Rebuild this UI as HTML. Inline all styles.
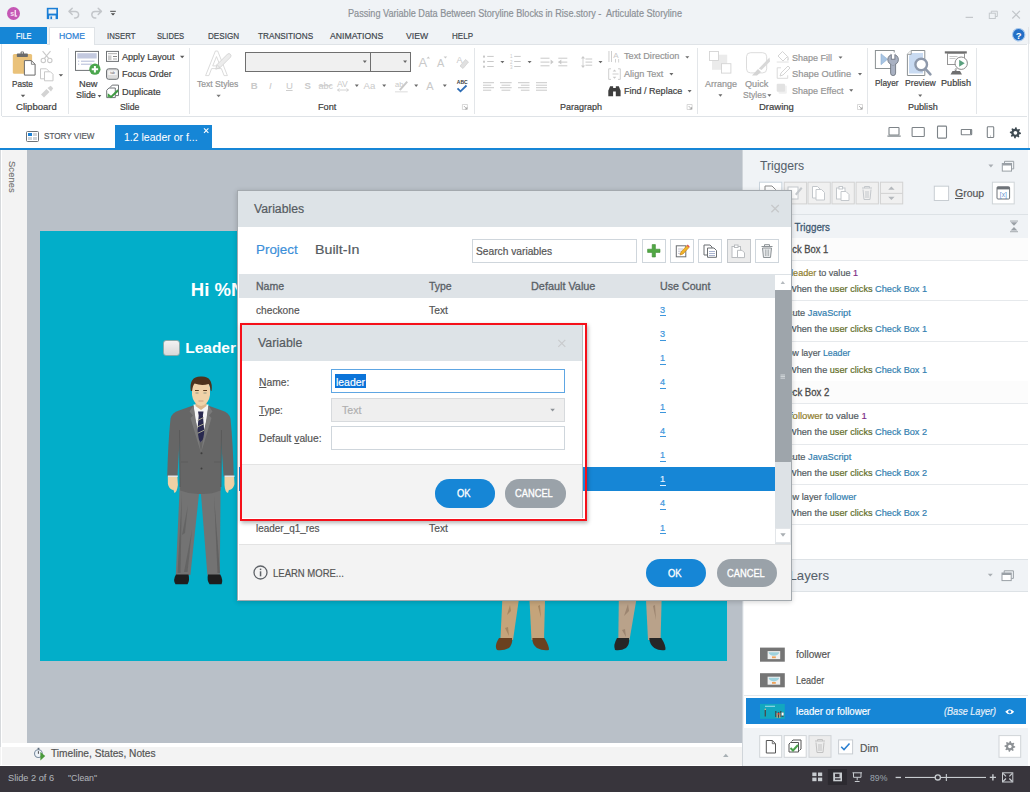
<!DOCTYPE html><html><head><meta charset="utf-8"><style>
html,body{margin:0;padding:0;width:1030px;height:792px;overflow:hidden;background:#fff;}
body{position:relative;font-family:"Liberation Sans",sans-serif;}
.a{position:absolute;}
.t{position:absolute;white-space:nowrap;line-height:1;transform-origin:0 0;}
svg{display:block;overflow:visible}
u{text-decoration:underline;}
.t{-webkit-text-stroke:0.2px currentColor}
</style></head><body>
<div class="a" style="left:0px;top:0px;width:1030px;height:44px;background:#f0f3f6;"></div>
<div class="a" style="left:0px;top:44px;width:1030px;height:105px;background:#ffffff;"></div>
<div class="a" style="left:1px;top:44px;width:1px;height:72px;background:#dfe3e7;"></div>
<div class="a" style="left:1028px;top:27px;width:1px;height:121px;background:#e3e6e9;"></div>
<div class="a" style="left:2px;top:116px;width:1025px;height:1px;background:#dfe3e7;"></div>
<div class="a" style="left:0px;top:26.6px;width:47.3px;height:17.4px;background:#1686d6;"></div>
<div class="a" style="left:49px;top:27px;width:46px;height:18px;background:#ffffff;border:1px solid #dfe3e7;border-bottom:none;box-sizing:border-box;"></div>
<div class="a" style="left:47.3px;top:43.5px;width:2px;height:1px;background:#dfe3e7;"></div>
<div class="a" style="left:95px;top:43.5px;width:932px;height:1px;background:#dfe3e7;"></div>
<div class="a" style="left:6px;top:6px;width:15px;height:15px;"><svg width="15" height="15" viewBox="0 0 15 15"><circle cx="7.5" cy="7.5" r="6.5" fill="#c557b5"/><text x="4.2" y="9.9" font-size="7" font-family="Liberation Sans" font-weight="bold" fill="#f4dcf0">s</text><path d="M9.3,4 v5.9 h1.8" fill="none" stroke="#f4dcf0" stroke-width="1.5"/></svg></div>
<div class="t" style="left:347.7px;top:9.2px;font-size:10.0px;color:#8c9196;transform:scaleX(0.9123);">Passing Variable Data Between Storyline Blocks in Rise.story -&nbsp; Articulate Storyline</div>
<div class="t" style="left:15.8px;top:30.75px;font-size:9.71px;color:#ffffff;transform:scaleX(0.7561);">FILE</div>
<div class="t" style="left:59.3px;top:30.75px;font-size:9.71px;color:#2a7ed3;transform:scaleX(0.8893);">HOME</div>
<div class="t" style="left:107px;top:30.75px;font-size:9.71px;color:#40464c;transform:scaleX(0.8021);">INSERT</div>
<div class="t" style="left:156.8px;top:30.75px;font-size:9.71px;color:#40464c;transform:scaleX(0.7880);">SLIDES</div>
<div class="t" style="left:207.8px;top:30.75px;font-size:9.71px;color:#40464c;transform:scaleX(0.8360);">DESIGN</div>
<div class="t" style="left:258.3px;top:30.75px;font-size:9.71px;color:#40464c;transform:scaleX(0.8446);">TRANSITIONS</div>
<div class="t" style="left:330.3px;top:30.75px;font-size:9.71px;color:#40464c;transform:scaleX(0.8915);">ANIMATIONS</div>
<div class="t" style="left:405.6px;top:30.75px;font-size:9.71px;color:#40464c;transform:scaleX(0.8907);">VIEW</div>
<div class="t" style="left:452px;top:30.75px;font-size:9.71px;color:#40464c;transform:scaleX(0.8281);">HELP</div>
<div class="a" style="left:67.5px;top:48px;width:1px;height:66px;background:#e3e6e9;"></div>
<div class="a" style="left:188.5px;top:48px;width:1px;height:66px;background:#e3e6e9;"></div>
<div class="a" style="left:473.5px;top:48px;width:1px;height:66px;background:#e3e6e9;"></div>
<div class="a" style="left:696.5px;top:48px;width:1px;height:66px;background:#e3e6e9;"></div>
<div class="a" style="left:866.5px;top:48px;width:1px;height:66px;background:#e3e6e9;"></div>
<div class="a" style="left:975.5px;top:48px;width:1px;height:66px;background:#e3e6e9;"></div>
<div class="t" style="left:11.7px;top:79.39px;font-size:9.42px;color:#3e3e3e;transform:scaleX(0.8686);">Paste</div>
<div class="t" style="left:15.5px;top:102.64px;font-size:9.13px;color:#3e3e3e;transform:scaleX(1.0445);">Clipboard</div>
<div class="t" style="left:79.2px;top:79.64px;font-size:9.13px;color:#3e3e3e;transform:scaleX(1.0128);">New</div>
<div class="t" style="left:75.7px;top:89.67px;font-size:9.57px;color:#3e3e3e;transform:scaleX(0.9311);">Slide</div>
<div class="t" style="left:122px;top:51.79px;font-size:9.42px;color:#3e3e3e;transform:scaleX(0.9634);">Apply Layout</div>
<div class="t" style="left:122px;top:69.51px;font-size:9.28px;color:#3e3e3e;transform:scaleX(0.9670);">Focus Order</div>
<div class="t" style="left:122px;top:86.99px;font-size:9.42px;color:#3e3e3e;transform:scaleX(0.9893);">Duplicate</div>
<div class="t" style="left:119.5px;top:102.37px;font-size:9.57px;color:#3e3e3e;transform:scaleX(0.9170);">Slide</div>
<div class="t" style="left:197px;top:79.39px;font-size:9.42px;color:#959595;transform:scaleX(0.9102);">Text Styles</div>
<div class="t" style="left:317.6px;top:102.64px;font-size:9.13px;color:#3e3e3e;transform:scaleX(1.0074);">Font</div>
<div class="t" style="left:624.2px;top:52.01px;font-size:9.28px;color:#959595;transform:scaleX(0.9850);">Text Direction</div>
<div class="t" style="left:624.2px;top:69.09px;font-size:9.42px;color:#959595;transform:scaleX(0.9702);">Align Text</div>
<div class="t" style="left:624.2px;top:86.09px;font-size:9.42px;color:#3e3e3e;transform:scaleX(0.9595);">Find / Replace</div>
<div class="t" style="left:559.5px;top:102.64px;font-size:9.13px;color:#3e3e3e;transform:scaleX(0.9853);">Paragraph</div>
<div class="t" style="left:704.6px;top:79.39px;font-size:9.42px;color:#959595;transform:scaleX(0.9561);">Arrange</div>
<div class="t" style="left:745.3px;top:79.39px;font-size:9.42px;color:#959595;transform:scaleX(0.9689);">Quick</div>
<div class="t" style="left:742.8px;top:89.67px;font-size:9.57px;color:#959595;transform:scaleX(0.8907);">Styles</div>
<div class="t" style="left:792px;top:52.99px;font-size:9.42px;color:#959595;transform:scaleX(0.9563);">Shape Fill</div>
<div class="t" style="left:792px;top:69.09px;font-size:9.42px;color:#959595;transform:scaleX(0.9929);">Shape Outline</div>
<div class="t" style="left:792px;top:85.59px;font-size:9.42px;color:#959595;transform:scaleX(0.9571);">Shape Effect</div>
<div class="t" style="left:759px;top:102.64px;font-size:9.13px;color:#3e3e3e;transform:scaleX(1.0423);">Drawing</div>
<div class="t" style="left:875.2px;top:79.44px;font-size:9.13px;color:#3e3e3e;transform:scaleX(0.9121);">Player</div>
<div class="t" style="left:904.9px;top:79.44px;font-size:9.13px;color:#3e3e3e;transform:scaleX(0.9455);">Preview</div>
<div class="t" style="left:940.9px;top:79.44px;font-size:9.13px;color:#3e3e3e;transform:scaleX(1.0021);">Publish</div>
<div class="t" style="left:907.5px;top:102.54px;font-size:9.13px;color:#3e3e3e;transform:scaleX(0.9921);">Publish</div>
<div class="a" style="left:244.8px;top:52px;width:126px;height:19.5px;background:#f0f0f0;border:1px solid #6f6f6f;box-sizing:border-box;"></div>
<div class="a" style="left:369.7px;top:52px;width:41px;height:19.5px;background:#f0f0f0;border:1px solid #6f6f6f;box-sizing:border-box;"></div>
<svg class="a" style="left:0;top:0" width="1030" height="150" viewBox="0 0 1030 150"><rect x="46.8" y="7.8" width="11.2" height="11.3" fill="#1a7ed6"/><rect x="48.5" y="9.3" width="7.8" height="4.3" fill="#f0f3f6"/><rect x="49.2" y="15.5" width="6.4" height="3.6" fill="#f0f3f6"/><rect x="50.4" y="16.4" width="1.7" height="2.7" fill="#1a7ed6"/><path d="M72.2,8.3 l-3.2,3.1 l3.2,3.1 M69.2,11.4 h6 a3.3,3.3 0 0 1 0.2,6.6 h-0.8" fill="none" stroke="#c3c6ca" stroke-width="1.5" stroke-linejoin="round" stroke-linecap="round"/><path d="M98.2,8.3 l3.2,3.1 l-3.2,3.1 M101.2,11.4 h-6 a3.3,3.3 0 0 0 -0.2,6.6 h0.8" fill="none" stroke="#c3c6ca" stroke-width="1.5" stroke-linejoin="round" stroke-linecap="round"/><rect x="110.2" y="10.8" width="5.6" height="1" fill="#4a4a4a"/><path d="M110.8,13.2 h4.4 l-2.2,2.3 z" fill="#4a4a4a"/><rect x="965.6" y="16.8" width="7.4" height="1.1" fill="#bfc3c7"/><rect x="989.3" y="13.2" width="6" height="5.3" fill="none" stroke="#c4c8cc" stroke-width="1"/><path d="M991.3,13.2 v-2 h6 v5.3 h-2" fill="none" stroke="#c4c8cc" stroke-width="1"/><path d="M1012.3,10.9 l7.6,7.6 M1019.9,10.9 l-7.6,7.6" stroke="#c2c6ca" stroke-width="1.2"/><circle cx="1018.7" cy="34.7" r="6.2" fill="#236fc6" stroke="#a9c8ec" stroke-width="1.1"/><text x="1018.7" y="38.6" font-family="Liberation Sans" font-weight="bold" font-size="9.5" fill="#fff" text-anchor="middle">?</text><rect x="12.8" y="53.9" width="19.3" height="19.9" rx="1.5" fill="#eac27a"/><rect x="16.8" y="53.6" width="11.1" height="3.4" rx="0.8" fill="#6b6b6b"/><rect x="20.6" y="51.4" width="3.4" height="3" rx="1" fill="#6b6b6b"/><rect x="21.6" y="52.3" width="1.4" height="1.2" fill="#eee"/><path d="M24.4,60.6 h7 l3.7,3.7 v10.8 h-10.7 z" fill="#fff" stroke="#6b6b6b" stroke-width="1"/><path d="M31.4,60.6 v3.7 h3.7" fill="none" stroke="#6b6b6b" stroke-width="0.8"/><path d="M20.8,94.8 h4.4 l-2.2,2.4 z" fill="#5a5a5a"/><g fill="none" stroke="#c9c9c9" stroke-width="1.1"><circle cx="43.3" cy="60.4" r="2.2"/><circle cx="49.8" cy="60.4" r="2.2"/><path d="M44.4,58.4 L50.5,51.2 M48.7,58.4 L42.6,51.2"/></g><g fill="#fff" stroke="#c9c9c9" stroke-width="1"><path d="M40.5,68.8 h6 l2.5,2.5 v7.5 h-8.5 z"/><path d="M44.5,71.8 h6 l2.5,2.5 v6.5 h-8.5 z"/></g><path d="M58.699999999999996,74.2 h4.4 l-2.2,2.4 z" fill="#5a5a5a"/><g fill="#c9c9c9" opacity="0.8"><path d="M41,94.5 l5.5,-5.5 l3,3 l-5.5,5.5 z"/><path d="M47.5,88 l3.2,-2.2 l2.5,2.5 l-2.2,3.2 z"/></g><rect x="75.5" y="51.4" width="23" height="19" fill="#fff" stroke="#6f7376" stroke-width="1"/><rect x="77.3" y="53.2" width="19.4" height="5.3" fill="#c3c9df"/><rect x="78" y="60.6" width="1.2" height="1.2" fill="#c3c9df"/><rect x="81" y="60.6" width="13.5" height="1.3" fill="#c3c9df"/><rect x="78" y="63.6" width="1.2" height="1.2" fill="#c3c9df"/><rect x="81" y="63.6" width="11" height="1.3" fill="#c3c9df"/><circle cx="94.9" cy="69.2" r="5.6" fill="#4aa64d"/><path d="M94.9,66 v6.4 M91.7,69.2 h6.4" stroke="#fff" stroke-width="2"/><path d="M97.7,95.1 h3.6 l-1.8,2.4 z" fill="#5a5a5a"/><rect x="106.5" y="51.4" width="12" height="10" fill="#fff" stroke="#6f7376" stroke-width="1"/><rect x="108" y="53" width="9" height="1.2" fill="#bbb"/><rect x="108" y="55.4" width="3.5" height="4.8" fill="#ccc"/><rect x="113" y="56" width="4" height="1" fill="#888"/><rect x="113" y="58.5" width="4" height="1" fill="#aaa"/><path d="M180.0,55.8 h4.4 l-2.2,2.4 z" fill="#5a5a5a"/><rect x="106.5" y="68.8" width="12" height="10.5" rx="2.2" fill="#dcdcdc" stroke="#6f7376" stroke-width="1"/><rect x="108.2" y="70.4" width="8.6" height="4.6" rx="0.6" fill="#f4f4f4"/><text x="112.5" y="73.9" font-family="Liberation Sans" font-size="3.2" fill="#555" text-anchor="middle">tab</text><path d="M110,87.5 l2.2,-2.4 h6.3 v10.5 h-3" fill="#fff" stroke="#6f7376" stroke-width="1"/><path d="M106.7,90.3 l2.2,-2.3 h6.4 v9.6 h-8.6 z" fill="#fff" stroke="#6f7376" stroke-width="1"/><path d="M107.8,93.2 l3.2,2.6 l6.6,-6.6 l0.9,2.2 l-7.5,6.8 l-3.3,-2.6 z" fill="#3f9a42"/><path d="M107.5,95.5 v1.8 h4.5 z" fill="#57ad58"/><path d="M205.6,75.6 L215.4,51 h2.3 L227.4,75.6 h-3.3 L221.4,68.6 h-9.8 L208.9,75.6 z M212.7,65.9 h7.6 L216.5,56.6 z" fill="#fff" stroke="#d2d2d2" stroke-width="0.8" fill-rule="evenodd"/><path d="M215.8,69.2 l1.2,-4.6 l10.6,-10.6 q1.6,-1 2.8,0.3 q1.2,1.2 0.2,2.8 l-10.6,10.6 z" fill="#ececec" stroke="#cfcfcf" stroke-width="0.8"/><path d="M217,64.6 l3.4,3.4" stroke="#cfcfcf" stroke-width="0.7"/><path d="M216.4,94.8 h4.4 l-2.2,2.4 z" fill="#7a7a7a"/><path d="M362.8,60.599999999999994 h4 l-2.0,2.4 z" fill="#666"/><path d="M403.1,60.599999999999994 h4 l-2.0,2.4 z" fill="#666"/><path d="M354.8,84.5 h4 l-2.0,2.4 z" fill="#6a6a6a"/><path d="M382.2,84.5 h4 l-2.0,2.4 z" fill="#6a6a6a"/><path d="M414.2,84.5 h4 l-2.0,2.4 z" fill="#6a6a6a"/><path d="M442.8,84.5 h4 l-2.0,2.4 z" fill="#6a6a6a"/><path d="M500.4,60.9 h4 l-2.0,2.4 z" fill="#6a6a6a"/><path d="M527.6,60.9 h4 l-2.0,2.4 z" fill="#6a6a6a"/><path d="M598.5,60.9 h4 l-2.0,2.4 z" fill="#6a6a6a"/><path d="M685.3,56.199999999999996 h4 l-2.0,2.4 z" fill="#6a6a6a"/><path d="M669.4,73.0 h4 l-2.0,2.4 z" fill="#6a6a6a"/><path d="M687.6,90.1 h4 l-2.0,2.4 z" fill="#6a6a6a"/><path d="M718.4,94.3 h4 l-2.0,2.4 z" fill="#6a6a6a"/><path d="M767.4,94.3 h4 l-2.0,2.4 z" fill="#6a6a6a"/><path d="M838.5,56.4 h4 l-2.0,2.4 z" fill="#6a6a6a"/><path d="M858.0,73.0 h4 l-2.0,2.4 z" fill="#6a6a6a"/><path d="M849.2,89.3 h4 l-2.0,2.4 z" fill="#6a6a6a"/><path d="M918.2,94.5 h4 l-2.0,2.4 z" fill="#6a6a6a"/><text x="418.6" y="67" font-family="Liberation Sans" font-size="13" fill="#c9c9c9">A</text><path d="M426.5,58.5 l1.8,-2 l1.8,2" fill="#c9c9c9"/><text x="437" y="67" font-family="Liberation Sans" font-size="11" fill="#c9c9c9">A</text><path d="M443.6,56.4 h3.6 l-1.8,2 z" fill="#c9c9c9"/><text x="456.5" y="63" font-family="Liberation Sans" font-size="9" fill="#c9c9c9">A</text><path d="M460,66 l5.5,-6.5 l3,2.5 l-5.5,6.5 z" fill="#e0e0e0" stroke="#c9c9c9" stroke-width="0.6"/><g font-family="Liberation Sans" fill="#c9c9c9"><text x="250.7" y="88.8" font-size="9.6" font-weight="bold">B</text><text x="269" y="88.8" font-size="9.6" font-style="italic">I</text><text x="286" y="88.8" font-size="9.6">U</text><text x="304.6" y="88.8" font-size="9.6" font-weight="bold">S</text><text x="318.6" y="88.8" font-size="9">abc</text></g><rect x="286" y="90" width="6.6" height="0.9" fill="#c9c9c9"/><rect x="318.6" y="85.3" width="13" height="0.9" fill="#c9c9c9"/><text x="337" y="87" font-family="Liberation Sans" font-size="8.6" fill="#c9c9c9">AV</text><path d="M337.5,90 h11 M337.5,90 l2,-1.5 M337.5,90 l2,1.5 M348.5,90 l-2,-1.5 M348.5,90 l-2,1.5" stroke="#c9c9c9" stroke-width="0.8" fill="none"/><text x="363.6" y="89.2" font-family="Liberation Sans" font-size="9.6" fill="#c9c9c9">Aa</text><text x="395" y="87" font-family="Liberation Sans" font-size="7.5" fill="#c9c9c9">ab</text><path d="M399,89.5 l7.5,-8.5 l1.5,1.3 l-7.5,8.5 z" fill="#c9c9c9"/><rect x="395" y="91" width="12.7" height="1.5" fill="#e8e8e8"/><text x="426.3" y="90" font-family="Liberation Sans" font-size="11" fill="#c9c9c9">A</text><text x="456.8" y="84.2" font-family="Liberation Sans" font-size="5" font-weight="bold" fill="#3a3a3a">ABC</text><path d="M457.5,88.3 l3,3 l6,-5.8" fill="none" stroke="#2e6db5" stroke-width="1.8"/><path d="M462.4,104.5 h5 v5 h-5 z" fill="none" stroke="#c8c8c8" stroke-width="0.7"/><path d="M463.9,106 l3,3 m0,-2 v2 h-2" fill="none" stroke="#999" stroke-width="0.7"/><path d="M687.1,104.5 h5 v5 h-5 z" fill="none" stroke="#c8c8c8" stroke-width="0.7"/><path d="M688.6,106 l3,3 m0,-2 v2 h-2" fill="none" stroke="#999" stroke-width="0.7"/><path d="M857.5,104.5 h5 v5 h-5 z" fill="none" stroke="#c8c8c8" stroke-width="0.7"/><path d="M859,106 l3,3 m0,-2 v2 h-2" fill="none" stroke="#999" stroke-width="0.7"/><rect x="483" y="55.6" width="2" height="2" fill="#c9c9c9"/><rect x="487.2" y="55.9" width="6.5" height="1" fill="#c9c9c9"/><rect x="483" y="60.7" width="2" height="2" fill="#c9c9c9"/><rect x="487.2" y="61.0" width="6.5" height="1" fill="#c9c9c9"/><rect x="483" y="65.7" width="2" height="2" fill="#c9c9c9"/><rect x="487.2" y="66.0" width="6.5" height="1" fill="#c9c9c9"/><text x="510" y="58.4" font-family="Liberation Sans" font-size="4.5" fill="#c9c9c9">1</text><rect x="514.2" y="55.9" width="6.5" height="1" fill="#c9c9c9"/><text x="510" y="63.5" font-family="Liberation Sans" font-size="4.5" fill="#c9c9c9">2</text><rect x="514.2" y="61.0" width="6.5" height="1" fill="#c9c9c9"/><text x="510" y="68.5" font-family="Liberation Sans" font-size="4.5" fill="#c9c9c9">3</text><rect x="514.2" y="66.0" width="6.5" height="1" fill="#c9c9c9"/><rect x="540.5" y="57.7" width="9" height="1" fill="#c9c9c9"/><rect x="540.5" y="61.6" width="9" height="1" fill="#c9c9c9"/><rect x="540.5" y="65.3" width="9" height="1" fill="#c9c9c9"/><path d="M553.6,62.1 l-3,-2.5 v5 z" fill="#c9c9c9"/><rect x="558.3" y="57.7" width="9" height="1" fill="#c9c9c9"/><rect x="558.3" y="61.6" width="9" height="1" fill="#c9c9c9"/><rect x="558.3" y="65.3" width="9" height="1" fill="#c9c9c9"/><path d="M558.3,62.1 l3,-2.5 v5 z" fill="#c9c9c9"/><rect x="585.5" y="58.5" width="6.7" height="1" fill="#c9c9c9"/><rect x="585.5" y="61.6" width="6.7" height="1" fill="#c9c9c9"/><rect x="585.5" y="64.7" width="6.7" height="1" fill="#c9c9c9"/><path d="M583,56 l-2,2.5 h4 z M583,68.1 l-2,-2.5 h4 z" fill="#c9c9c9"/><rect x="582.6" y="58" width="0.8" height="8" fill="#c9c9c9"/><rect x="483.0" y="82.2" width="11.0" height="1" fill="#c9c9c9"/><rect x="483.0" y="84.7" width="8.2" height="1" fill="#c9c9c9"/><rect x="483.0" y="87.2" width="11.0" height="1" fill="#c9c9c9"/><rect x="483.0" y="89.7" width="8.2" height="1" fill="#c9c9c9"/><rect x="500.0" y="82.2" width="11.7" height="1" fill="#c9c9c9"/><rect x="501.5" y="84.7" width="8.8" height="1" fill="#c9c9c9"/><rect x="500.0" y="87.2" width="11.7" height="1" fill="#c9c9c9"/><rect x="501.5" y="89.7" width="8.8" height="1" fill="#c9c9c9"/><rect x="518.0" y="82.2" width="11.5" height="1" fill="#c9c9c9"/><rect x="520.9" y="84.7" width="8.6" height="1" fill="#c9c9c9"/><rect x="518.0" y="87.2" width="11.5" height="1" fill="#c9c9c9"/><rect x="520.9" y="89.7" width="8.6" height="1" fill="#c9c9c9"/><rect x="536.0" y="82.2" width="11.0" height="1" fill="#c9c9c9"/><rect x="536.0" y="84.7" width="11.0" height="1" fill="#c9c9c9"/><rect x="536.0" y="87.2" width="11.0" height="1" fill="#c9c9c9"/><rect x="536.0" y="89.7" width="11.0" height="1" fill="#c9c9c9"/><g fill="#c9c9c9"><rect x="608.5" y="51" width="0.9" height="11"/><rect x="611" y="51" width="0.9" height="11"/><text x="613.3" y="58" font-family="Liberation Sans" font-size="8" fill="#c9c9c9">A</text><rect x="615" y="59" width="0.8" height="3.5"/><rect x="618.3" y="59" width="0.8" height="3.5"/></g><g fill="none" stroke="#c9c9c9" stroke-width="0.9"><path d="M611,68.8 h-2.3 v10.6 h2.3 M618,68.8 h2.3 v10.6 h-2.3"/><path d="M612.5,74 h6"/></g><path d="M614.5,69.5 l-1.8,2 h3.6 z M614.5,78.8 l-1.8,-2 h3.6 z" fill="#c9c9c9"/><g fill="#3d3d3d"><path d="M608.3,96.3 v-5.5 l1.8,-4.5 h3 v10 z"/><path d="M620.6,96.3 v-5.5 l-1.8,-4.5 h-3 v10 z"/><rect x="612.6" y="88" width="3.6" height="3.5"/></g><rect x="712" y="54.7" width="15.2" height="15.1" fill="#ebebeb"/><rect x="709.5" y="51.5" width="9" height="9" fill="#fff" stroke="#d4d4d4" stroke-width="0.9"/><rect x="721.5" y="63.7" width="9.4" height="9.4" fill="#fff" stroke="#d4d4d4" stroke-width="0.9"/><rect x="746.5" y="52.7" width="20.2" height="20.2" rx="4" fill="#fff" stroke="#d8d8d8" stroke-width="0.9"/><path d="M752,75.5 l6,-6.5 l3,3 l-4,3.5 z" fill="#d4d4d4"/><path d="M758.8,68.4 l10.7,-10.8 l0.5,4 l-8.5,8.5 z" fill="#d8d8d8"/><path d="M778,56 l4.5,-4.5 l5,5 l-4.5,4.5 z" fill="#fff" stroke="#d0d0d0" stroke-width="0.9"/><path d="M787.5,56.5 q1.5,2.5 0,4" fill="none" stroke="#d6d6d6" stroke-width="1.2"/><rect x="776.7" y="61.3" width="12" height="1.5" fill="#ececec"/><path d="M781,67.8 h-3.8 v10.5 h10.5 v-3" fill="none" stroke="#d6d6d6" stroke-width="0.9"/><path d="M780,76 l1,-3 l7,-7 l2,2 l-7,7 z" fill="#fff" stroke="#d0d0d0" stroke-width="0.9"/><rect x="778.5" y="85.5" width="8.3" height="8.3" rx="1" fill="#f0f0f0"/><rect x="776.7" y="83.8" width="8.3" height="8" rx="1" fill="#e2e2e2"/><rect x="875.4" y="50.5" width="18.8" height="18" fill="#fff" stroke="#8b9193" stroke-width="1"/><path d="M881,53.8 v10.9 l6.6,-5.5 z" fill="#a8c5e3" stroke="#8fb0d5" stroke-width="0.6"/><g fill="#a9b1c2" stroke="#6f7680" stroke-width="0.9"><rect x="890.6" y="62" width="5" height="13.6" rx="2.5"/><circle cx="893.1" cy="59.6" r="5.3"/></g><rect x="891.3" y="53.6" width="3.6" height="5.6" fill="#fff" stroke="#6f7680" stroke-width="0.9"/><rect x="890.7" y="52.5" width="4.8" height="1.8" fill="#fff"/><rect x="891.3" y="62" width="3.6" height="3" fill="#a9b1c2"/><path d="M911.2,50.5 h13.6 v25 h-17.4 v-21.2 z" fill="#fff" stroke="#8b9193" stroke-width="1"/><path d="M910,53 h13 v20.5 h-14 v-17 z" fill="#c9dbf2"/><path d="M907.4,54.3 h3.8 v-3.8" fill="#fff" stroke="#8b9193" stroke-width="0.9"/><circle cx="921.2" cy="64.5" r="5.8" fill="#fff" stroke="#8e99ab" stroke-width="2.4"/><path d="M925.4,68.8 l5,5.6" stroke="#8e99ab" stroke-width="2.6" stroke-linecap="round"/><rect x="944.8" y="51.3" width="22" height="2.2" fill="#6f6f6f"/><rect x="947.5" y="53.5" width="17" height="11" fill="#fff" stroke="#8a8a8a" stroke-width="0.9"/><rect x="949.5" y="56" width="8" height="0.8" fill="#bbb"/><rect x="949.5" y="58" width="6" height="0.8" fill="#bbb"/><circle cx="961.2" cy="63.2" r="6.2" fill="#fff" stroke="#8a8a8a" stroke-width="1"/><path d="M959.2,59.8 v7 l5.5,-3.5 z" fill="#5aa07e"/><path d="M950.5,74.6 l2,-3.6 h7.5 l2,3.6 z" fill="#6f6f6f"/><path d="M956,68 v3 l-1.5,-1" stroke="#6f6f6f" stroke-width="0.8" fill="none"/></svg>
<div class="t" style="left:43.5px;top:132.44px;font-size:9.13px;color:#555a60;transform:scaleX(0.8891);">STORY VIEW</div>
<div class="a" style="left:115px;top:125px;width:96.6px;height:23px;background:#1686d6;"></div>
<div class="t" style="left:123.9px;top:132.21px;font-size:10.58px;color:#ffffff;transform:scaleX(0.9933);-webkit-text-stroke:0.05px currentColor;">1.2 leader or f...</div>
<svg class="a" style="left:0;top:0" width="1030" height="160" viewBox="0 0 1030 160"><path d="M204,128.4 l4.4,4.4 M208.4,128.4 l-4.4,4.4" stroke="#fff" stroke-width="1.1"/></svg>
<div class="a" style="left:0px;top:148px;width:1030px;height:2px;background:#1686d6;"></div>
<div class="a" style="left:0px;top:150px;width:27px;height:593px;background:#f3f3f3;"></div>
<div class="a" style="left:0px;top:150px;width:1px;height:616px;background:#d6d9dc;"></div>
<div class="a" style="left:27px;top:150px;width:715px;height:593px;background:#b9c0c8;"></div>
<div class="a" style="left:26.7px;top:742.6px;width:715.3px;height:4.3px;background:#ffffff;"></div>
<div class="a" style="left:0px;top:746.9px;width:742px;height:18.1px;background:#f3f3f3;"></div>
<div class="a" style="left:0px;top:765px;width:742px;height:1px;background:#ffffff;"></div>
<div class="a" style="left:1px;top:150px;width:1px;height:615px;background:#ffffff;"></div>
<svg class="a" style="left:0;top:0" width="1030" height="792" viewBox="0 0 1030 792"><path d="M723,757.1 h5.6 l-2.8,-3.4 z" fill="#a8b0b4"/></svg>
<div class="t" style="left:0px;top:-7.99px;font-size:9.4px;color:#6f6f6f;left:16.5px;top:161.2px;letter-spacing:0.1px;transform:rotate(90deg);transform-origin:0 0;-webkit-text-stroke:0.1px currentColor;">Scenes</div>
<div class="t" style="left:51px;top:748.85px;font-size:10.29px;color:#555;transform:scaleX(0.9877);">Timeline, States, Notes</div>
<div class="a" style="left:40px;top:230.7px;width:687.3px;height:430px;background:#02aec9;"></div>
<div class="t" style="left:190.8px;top:280.63px;font-size:18.55px;color:#ffffff;font-weight:700;-webkit-text-stroke:0;">Hi %Name%</div>
<div class="a" style="left:162.9px;top:340px;width:16.8px;height:16.2px;background:linear-gradient(#f2f2f2,#d8d8d8);border:1px solid #8aa;box-sizing:border-box;border-radius:3px;"></div>
<div class="t" style="left:185.2px;top:340.32px;font-size:15.51px;color:#ffffff;font-weight:700;-webkit-text-stroke:0;">Leader</div>
<svg class="a" style="left:0;top:0" width="1030" height="792" viewBox="0 0 1030 792"><path d="M179.8,484 h40.8 l-0.8,91 h-12.4 l-6.6,-83 h-1.6 l-8.8,83 h-14.6 z" fill="#737373"/><path d="M182,492 l-4.5,81 h3 z" fill="#636363"/><path d="M214,495 l3.5,78 h2.5 z" fill="#616161"/><path d="M192,530 l-8,42 h3.5 z M188,505 l-6,30 l3,-2 z" fill="#5e5e5e" opacity="0.7"/><path d="M176,574.5 h12.5 q1.5,6 -1,9.7 h-12 q-3,-4 0.5,-9.7 z" fill="#1e1e1e"/><path d="M208,574.5 h12.3 q3,5.5 1.3,9.7 h-12 q-3,-4 -1.6,-9.7 z" fill="#1e1e1e"/><path d="M167.8,477 h9.6 l0.5,8 q-1,7.5 -3.5,8 q-1,-4 -1.5,-3 q-4,-1 -5,-6 z" fill="#efd1a5"/><path d="M224.5,477 h9.6 l0.4,7 q-1,5 -5,6 q-0.5,-1 -1.5,3 q-3,-0.5 -3.5,-8 z" fill="#efd1a5"/><path d="M193,405.5 l-14,5 q-7,2 -8.5,8 q-2.5,25 -3.3,58 h10.2 l2.2,-36 l0.5,50 q10,4 20.5,3.5 q10.5,0.5 20,-3.5 l0.5,-50 l2.5,36 h10.2 q-0.8,-33 -3.3,-58 q-1.5,-6 -8.5,-8 l-14,-5 z" fill="#666666"/><path d="M179.5,430 l0.6,57 M221.5,430 l-0.6,57" stroke="#5a5a5a" stroke-width="1"/><path d="M167.8,475.5 h10 v1.6 h-10 z M224.5,475.5 h10 v1.6 h-10 z" fill="#e6e6e6"/><path d="M181,462 h7 M214,462 h7" stroke="#5c5c5c" stroke-width="0.8"/><path d="M193.5,404.5 h15 l-1.5,14 l-6,24 l-6,-24 z" fill="#f5f5f5"/><path d="M198,411.5 h5.5 l-0.6,4 l1.8,21 l-3.9,6 l-3.9,-6 l1.8,-21 z" fill="#29294f"/><path d="M197.6,420.5 l6,-3 M197.2,427 l6.8,-3.2 M197.2,433.5 l6.8,-3.2" stroke="#b7b59a" stroke-width="0.9"/><path d="M193.5,405.5 l-4,6 l3.5,4 l-2.5,2.5 l10.5,35 z" fill="#7a7a7a"/><path d="M208.5,405.5 l4,6 l-3.5,4 l2.5,2.5 l-10.5,35 z" fill="#7a7a7a"/><circle cx="201.5" cy="453.3" r="1" fill="#3e3e3e"/><circle cx="201.5" cy="468.5" r="1" fill="#3e3e3e"/><path d="M195.5,398 h11 v8 l-5.5,4 l-5.5,-4 z" fill="#dcb58a"/><path d="M192,388 q0,-9 9,-9 q9,0 9,9 v7 q-1,9 -9,11 q-8,-2 -9,-11 z" fill="#f0d2a8"/><path d="M190.8,391 q-2,-15 10.5,-14.5 q12,-0.5 10.3,14.5 l-1,-0.5 q-0.5,-5 -2,-6.5 q-7,2 -14,-0.5 q-2,2 -2.5,7.5 z" fill="#4e321c"/><path d="M195,390.5 h3.8 M203.2,390.5 h3.8" stroke="#5a3a20" stroke-width="1"/><path d="M195.5,393 h3 M203.5,393 h3" stroke="#7a8a7a" stroke-width="0.8"/><path d="M198.5,401 h5" stroke="#c4937a" stroke-width="0.8"/><path d="M502.3,600 h16.5 l-5.8,40 h-12.6 z" fill="#c5a47a"/><path d="M529.5,600 h15.5 l-1,40 h-12.5 z" fill="#c5a47a"/><path d="M510,605 l-3,10 l4,-4 z M538,606 l3,12 l-1,-13 z M505,628 l4,8 l-1,-9 z" fill="#a68660"/><path d="M499,638 h13 q1,6 -3,10 q-6,3 -12,2 q-3,-4 2,-12 z" fill="#6a4120"/><path d="M532.4,638 h12 q5,8 4.5,12 q-6,1 -12,-2 q-5,-4 -4.5,-10 z" fill="#6a4120"/><path d="M618.8,600 h17.5 l-6.8,40 h-11.2 z" fill="#b9a28a"/><path d="M646,600 h15.6 l-1,40 h-12.6 z" fill="#b9a28a"/><path d="M628,604 l-4,12 l5,-5 z M653,606 l3,14 l-1,-15 z M622,630 l4,7 l-1,-8 z" fill="#9c8570"/><path d="M617,638 h12 q1,6 -3,10 q-5,3 -11,2 q-2,-5 2,-12 z" fill="#262626"/><path d="M649.3,638 h12 q5,8 4,12 q-6,1 -11,-2 q-5,-4 -5,-10 z" fill="#262626"/></svg>
<div class="a" style="left:0px;top:766px;width:1030px;height:26px;background:#38353c;"></div>
<div class="t" style="left:8.2px;top:774.49px;font-size:8.84px;color:#b0b4ba;transform:scaleX(1.0437);-webkit-text-stroke:0.05px currentColor;">Slide 2 of 6</div>
<div class="t" style="left:67.5px;top:774.49px;font-size:8.84px;color:#b0b4ba;transform:scaleX(0.9917);-webkit-text-stroke:0.05px currentColor;">&quot;Clean&quot;</div>
<div class="t" style="left:869.7px;top:774.49px;font-size:8.84px;color:#97a0aa;transform:scaleX(0.9846);-webkit-text-stroke:0.05px currentColor;">89%</div>
<div class="a" style="left:742px;top:150px;width:286px;height:616px;background:#f0f3f6;"></div>
<div class="a" style="left:1028px;top:150px;width:2px;height:616px;background:#ffffff;"></div>
<div class="t" style="left:760.2px;top:160.08px;font-size:12.61px;color:#56616b;transform:scaleX(0.9655);-webkit-text-stroke:0.05px currentColor;">Triggers</div>
<div class="a" style="left:744px;top:214px;width:284px;height:1px;background:#dde2e6;"></div>
<div class="a" style="left:744px;top:214.5px;width:284px;height:23px;background:#f0f3f6;"></div>
<div class="t" style="left:769.76px;top:221.91px;font-size:11.16px;color:#3e5871;-webkit-text-stroke:0.3px currentColor;transform:scaleX(0.8801);">Slide Triggers</div>
<div class="a" style="left:744px;top:237.5px;width:284px;height:321px;background:#ffffff;"></div>
<div class="a" style="left:744px;top:237.5px;width:284px;height:23.0px;background:#fcfcfc;"></div>
<div class="a" style="left:744px;top:259.5px;width:284px;height:1px;background:#e6e9ec;"></div>
<div class="t" style="left:775.28px;top:245.38px;font-size:10.14px;color:#4a4a4a;-webkit-text-stroke:0.3px currentColor;transform:scaleX(0.9272);">Check Box 1</div>
<div class="a" style="left:744px;top:381px;width:284px;height:22.600000000000023px;background:#fcfcfc;"></div>
<div class="a" style="left:744px;top:402.6px;width:284px;height:1px;background:#e6e9ec;"></div>
<div class="t" style="left:774.89px;top:388.28px;font-size:10.14px;color:#4a4a4a;-webkit-text-stroke:0.3px currentColor;transform:scaleX(0.9478);">Check Box 2</div>
<div class="t" style="left:774.70px;top:268.15px;font-size:9.71px;color:#525a60;transform:scaleX(0.9321);">Set l<span style="color:#8e7c2c">eader</span> to value <span style="color:#7e2f86">1</span></div>
<div class="t" style="left:787.94px;top:283.65px;font-size:9.71px;color:#525a60;transform:scaleX(0.9444);">When the <span style="color:#626d28">user clicks</span> <span style="color:#3380b0">Check Box 1</span></div>
<div class="t" style="left:772.34px;top:308.25px;font-size:9.71px;color:#525a60;transform:scaleX(0.9480);">Execute <span style="color:#3380b0">JavaScript</span></div>
<div class="t" style="left:787.94px;top:324.05px;font-size:9.71px;color:#525a60;transform:scaleX(0.9444);">When the <span style="color:#626d28">user clicks</span> <span style="color:#3380b0">Check Box 1</span></div>
<div class="t" style="left:777.18px;top:348.35px;font-size:9.71px;color:#525a60;transform:scaleX(0.9049);">Show layer <span style="color:#3380b0">Leader</span></div>
<div class="t" style="left:787.94px;top:364.55px;font-size:9.71px;color:#525a60;transform:scaleX(0.9444);">When the <span style="color:#626d28">user clicks</span> <span style="color:#3380b0">Check Box 1</span></div>
<div class="t" style="left:773.21px;top:411.45px;font-size:9.71px;color:#525a60;transform:scaleX(0.9808);">Set f<span style="color:#8e7c2c">ollower</span> to value <span style="color:#7e2f86">1</span></div>
<div class="t" style="left:787.94px;top:427.15px;font-size:9.71px;color:#525a60;transform:scaleX(0.9444);">When the <span style="color:#626d28">user clicks</span> <span style="color:#3380b0">Check Box 2</span></div>
<div class="t" style="left:772.20px;top:451.65px;font-size:9.71px;color:#525a60;transform:scaleX(0.9545);">Execute <span style="color:#3380b0">JavaScript</span></div>
<div class="t" style="left:787.94px;top:467.65px;font-size:9.71px;color:#525a60;transform:scaleX(0.9444);">When the <span style="color:#626d28">user clicks</span> <span style="color:#3380b0">Check Box 2</span></div>
<div class="t" style="left:776.30px;top:491.95px;font-size:9.71px;color:#525a60;transform:scaleX(0.9555);">Show layer <span style="color:#3380b0">follower</span></div>
<div class="t" style="left:787.94px;top:507.65px;font-size:9.71px;color:#525a60;transform:scaleX(0.9444);">When the <span style="color:#626d28">user clicks</span> <span style="color:#3380b0">Check Box 2</span></div>
<div class="a" style="left:744px;top:300.2px;width:284px;height:1px;background:#e6e9ec;"></div>
<div class="a" style="left:744px;top:340.5px;width:284px;height:1px;background:#e6e9ec;"></div>
<div class="a" style="left:744px;top:443.8px;width:284px;height:1px;background:#e6e9ec;"></div>
<div class="a" style="left:744px;top:484px;width:284px;height:1px;background:#e6e9ec;"></div>
<div class="a" style="left:744px;top:524.4px;width:284px;height:1px;background:#e6e9ec;"></div>
<div class="a" style="left:744px;top:558.5px;width:284px;height:33px;background:#f0f3f6;border-top:1px solid #dde2e6;border-bottom:1px solid #dde2e6;box-sizing:border-box;"></div>
<div class="t" style="left:789.5px;top:568.98px;font-size:13.2px;color:#56616b;-webkit-text-stroke:0.05px currentColor;">Layers</div>
<div class="a" style="left:744px;top:591.5px;width:284px;height:136px;background:#ffffff;"></div>
<div class="a" style="left:744px;top:695px;width:284px;height:1px;background:#e3e7ea;"></div>
<div class="a" style="left:746.2px;top:698.4px;width:279.6px;height:26px;background:#1686d6;"></div>
<div class="t" style="left:795.7px;top:648.97px;font-size:11.45px;color:#555;transform:scaleX(0.8726);">follower</div>
<div class="t" style="left:795.7px;top:675.16px;font-size:10.87px;color:#555;transform:scaleX(0.8336);">Leader</div>
<div class="t" style="left:795.7px;top:706.04px;font-size:11.01px;color:#ffffff;transform:scaleX(0.8806);">leader or follower</div>
<div class="t" style="left:944.1px;top:705.95px;font-size:11.59px;color:#e8f0f8;font-style:italic;transform:scaleX(0.7860);">(Base Layer)</div>
<div class="t" style="left:859.7px;top:742.02px;font-size:11.74px;color:#555;transform:scaleX(0.8773);">Dim</div>
<div class="a" style="left:742px;top:150px;width:1px;height:616px;background:#d0d5da;"></div>
<svg class="a" style="left:0;top:0" width="1030" height="792" viewBox="0 0 1030 792"><path d="M988.4,164.6 h5 l-2.5,2.8 z" fill="#a9aeb3"/><rect x="1002.3" y="163.5" width="9.2" height="7.6" fill="#fff" stroke="#9aa0a6" stroke-width="1"/><rect x="1002.3" y="163.5" width="9.2" height="2" fill="#9aa0a6"/><path d="M1004.5,163.3 v-2 h9.2 v7.6 h-2" fill="none" stroke="#9aa0a6" stroke-width="1"/><rect x="759.5" y="182.2" width="22.3" height="21.7" fill="#fff" stroke="#c9d3dc" stroke-width="1"/><rect x="784.3" y="182.2" width="22.3" height="21.7" fill="#f0f0f0" stroke="#d2d2d2" stroke-width="1"/><rect x="808" y="182.2" width="22.3" height="21.7" fill="#f0f0f0" stroke="#d2d2d2" stroke-width="1"/><rect x="832" y="182.2" width="22.3" height="21.7" fill="#f0f0f0" stroke="#d2d2d2" stroke-width="1"/><rect x="856.1" y="182.2" width="22.3" height="21.7" fill="#f0f0f0" stroke="#d2d2d2" stroke-width="1"/><rect x="880.4" y="182.2" width="22.3" height="21.7" fill="#f0f0f0" stroke="#d2d2d2" stroke-width="1"/><path d="M880.4,193.4 h22.3" stroke="#d2d2d2" stroke-width="1"/><path d="M888.2,189.8 l3.2,-3.2 l3.2,3.2 z M888.2,196.8 l3.2,3.2 l3.2,-3.2 z" fill="#b4b8bc"/><path d="M765,186 h7 l3.5,3.5 v10 h-10.5 z" fill="#fff" stroke="#8a8a8a" stroke-width="1"/><rect x="788" y="187" width="10" height="12" fill="#fff" stroke="#c4c8cc" stroke-width="1"/><path d="M795,194 l6,-7 l1.5,1.5 l-6,7 z" fill="#c4c8cc"/><g fill="#fff" stroke="#c4c8cc" stroke-width="1"><path d="M812.5,186.5 h5 l2.5,2.5 v9 h-7.5 z"/><path d="M816,189.5 h5.5 l3,3 v7.5 h-8.5 z"/></g><g fill="#fff" stroke="#c4c8cc" stroke-width="1"><rect x="836.5" y="188" width="8.5" height="11"/><rect x="839" y="186.5" width="3.5" height="2.5"/><path d="M841,191.5 h5 l3,3 v6 h-8 z"/></g><g fill="none" stroke="#c4c8cc" stroke-width="1"><path d="M862,188 h10 M864.5,188 v-1.5 h5 v1.5 M863,189.5 l1,10 h6 l1,-10"/><path d="M866,191 v7 M868,191 v7"/></g><rect x="934.3" y="186.2" width="14.3" height="14.3" fill="#fff" stroke="#c8cdd2" stroke-width="1"/><rect x="992.4" y="182.2" width="21.8" height="21.7" fill="#fff" stroke="#cfd4d8" stroke-width="1"/><rect x="997" y="186.8" width="12.6" height="12.2" rx="1" fill="#fff" stroke="#6e7378" stroke-width="1"/><rect x="997" y="186.8" width="12.6" height="2.6" fill="#6e7378"/><text x="1003.3" y="197.4" font-family="Liberation Sans" font-size="6.5" fill="#5d8fd0" text-anchor="middle">[x]</text><rect x="1010" y="220.6" width="8" height="0.9" fill="#9aa0a6"/><rect x="1010" y="231.3" width="8" height="0.9" fill="#9aa0a6"/><path d="M1010.6,222.2 h6.8 l-3.4,3.6 z M1010.6,230.6 h6.8 l-3.4,-3.6 z" fill="#9aa0a6"/><path d="M987.8,573.8 h5 l-2.5,2.8 z" fill="#a9aeb3"/><rect x="1002" y="573" width="9.2" height="7.6" fill="#fff" stroke="#9aa0a6" stroke-width="1"/><rect x="1002" y="573" width="9.2" height="2" fill="#9aa0a6"/><path d="M1004.2,572.8 v-2 h9.2 v7.6 h-2" fill="none" stroke="#9aa0a6" stroke-width="1"/><rect x="760" y="647.6" width="24.8" height="14.1" fill="#757575"/><rect x="767.6" y="651.1" width="12.6" height="8" fill="#eef0f0"/><path d="M768.5,652.2 h10.8 q-0.8,3.4 -5.4,3.6 q-4.6,-0.2 -5.4,-3.6 z" fill="#9fd3de"/><rect x="772" y="656.4" width="3.8" height="1.8" fill="#f0a35a"/><rect x="760" y="673.2" width="24.8" height="14.1" fill="#757575"/><rect x="767.6" y="676.7" width="12.6" height="8" fill="#eef0f0"/><path d="M768.5,677.8000000000001 h10.8 q-0.8,3.4 -5.4,3.6 q-4.6,-0.2 -5.4,-3.6 z" fill="#9fd3de"/><rect x="772" y="682.0" width="3.8" height="1.8" fill="#f0a35a"/><rect x="760" y="703.9" width="24.8" height="14.9" fill="#12a7bf"/><rect x="765" y="705.8" width="10" height="0.8" fill="#cdeff5"/><path d="M765.3,710 v6.5" stroke="#4a4a4a" stroke-width="1.3"/><circle cx="765.3" cy="709.3" r="0.8" fill="#d9b48a"/><path d="M775.8,711 v6 M778.5,712 v5.5 M780.8,711 v6 M782.8,712 v5" stroke="#444" stroke-width="1.2"/><path d="M777.2,713 v5 M779.8,713 v5" stroke="#c9a478" stroke-width="1.2"/><rect x="781.6" y="712.5" width="2" height="3" fill="#fff"/><rect x="777.8" y="712.8" width="1.5" height="2" fill="#c33"/><path d="M1005.2,711.8 q4.5,-5 9,0 q-4.5,5 -9,0 z" fill="#fff"/><circle cx="1009.7" cy="711.8" r="1.6" fill="#1a80d6"/><rect x="759.7" y="735.6" width="22" height="21.7" fill="#fff" stroke="#d0d4d8" stroke-width="1"/><rect x="784.2" y="735.6" width="22" height="21.7" fill="#fff" stroke="#d0d4d8" stroke-width="1"/><rect x="809" y="735.6" width="22" height="21.7" fill="#ececec" stroke="#d0d4d8" stroke-width="1"/><path d="M766.3,740.5 h6 l3.2,3.2 v9.3 h-9.2 z" fill="#fff" stroke="#555" stroke-width="1"/><path d="M772.3,740.5 v3.2 h3.2" fill="none" stroke="#555" stroke-width="0.8"/><path d="M791.5,741.5 l1.5,-1.5 h8 v9 l-1.5,1.5" fill="#fff" stroke="#555" stroke-width="1"/><path d="M789,744 l1.5,-1.5 h8 v9.5 h-9.5 z" fill="#fff" stroke="#555" stroke-width="1"/><path d="M790.5,748 l2.5,2.5 l5,-5.5" fill="none" stroke="#49a14b" stroke-width="2"/><g fill="none" stroke="#c2c2c2" stroke-width="1"><path d="M815,741 h10 M817.5,741 v-1.5 h5 v1.5 M816,742.5 l1,10 h6 l1,-10"/><path d="M819,744 v7 M821,744 v7"/></g><rect x="838.6" y="739.9" width="14" height="14" fill="#fff" stroke="#c8cdd2" stroke-width="1"/><path d="M841.2,746.8 l2.8,2.8 l5.5,-6.2" fill="none" stroke="#2a7fd0" stroke-width="1.5"/><rect x="999" y="735.6" width="21.7" height="21.7" fill="#fff" stroke="#d0d4d8" stroke-width="1"/><polygon points="1009.85,741.05 1010.90,741.15 1011.34,742.86 1012.01,743.22 1013.67,742.63 1014.34,743.45 1013.44,744.96 1013.66,745.69 1015.25,746.45 1015.15,747.50 1013.44,747.94 1013.08,748.61 1013.67,750.27 1012.85,750.94 1011.34,750.04 1010.61,750.26 1009.85,751.85 1008.80,751.75 1008.36,750.04 1007.69,749.68 1006.03,750.27 1005.36,749.45 1006.26,747.94 1006.04,747.21 1004.45,746.45 1004.55,745.40 1006.26,744.96 1006.62,744.29 1006.03,742.63 1006.85,741.96 1008.36,742.86 1009.09,742.64" fill="#8e9296"/><circle cx="1009.85" cy="746.45" r="1.78" fill="#fff"/><rect x="26.5" y="131.5" width="12" height="10" rx="1" fill="#fff" stroke="#6e7378" stroke-width="1"/><rect x="28" y="133" width="4" height="3" fill="#1a7fd4"/><rect x="33" y="133" width="4" height="3" fill="#d0d4d8"/><rect x="28" y="137" width="4" height="3" fill="#d0d4d8"/><rect x="33" y="137" width="4" height="3" fill="#d0d4d8"/><rect x="889" y="127.5" width="10" height="7.5" rx="0.6" fill="none" stroke="#7d8388" stroke-width="1.1"/><rect x="887.4" y="135.5" width="13.3" height="1.2" fill="#7d8388"/><rect x="912.1" y="127.5" width="12.2" height="9" rx="0.8" fill="none" stroke="#7d8388" stroke-width="1.1"/><rect x="937.5" y="126.1" width="9" height="12" rx="0.8" fill="none" stroke="#7d8388" stroke-width="1.1"/><rect x="961.3" y="129.5" width="10.4" height="5.2" rx="0.5" fill="none" stroke="#7d8388" stroke-width="1.1"/><rect x="970" y="130" width="1.5" height="4.2" fill="#7d8388"/><rect x="987.3" y="126.7" width="6.4" height="10.8" rx="0.8" fill="none" stroke="#7d8388" stroke-width="1.1"/><circle cx="990.5" cy="136" r="0.5" fill="#7d8388"/><polygon points="1015.40,127.25 1016.49,127.36 1016.94,129.12 1017.64,129.50 1019.36,128.89 1020.06,129.74 1019.13,131.31 1019.35,132.06 1021.00,132.85 1020.89,133.94 1019.13,134.39 1018.75,135.09 1019.36,136.81 1018.51,137.51 1016.94,136.58 1016.19,136.80 1015.40,138.45 1014.31,138.34 1013.86,136.58 1013.16,136.20 1011.44,136.81 1010.74,135.96 1011.67,134.39 1011.45,133.64 1009.80,132.85 1009.91,131.76 1011.67,131.31 1012.05,130.61 1011.44,128.89 1012.29,128.19 1013.86,129.12 1014.61,128.90" fill="#3e4a52"/><circle cx="1015.4" cy="132.85" r="1.85" fill="#fff"/><circle cx="38.4" cy="753.6" r="3.9" fill="#eef3f8" stroke="#7d8ea0" stroke-width="1.1"/><rect x="37.6" y="747.8" width="1.8" height="1.8" fill="#5a6a7a"/><path d="M38.4,753.8 v-2.6" stroke="#333" stroke-width="0.9"/><path d="M40.4,752 l4.8,4 l-4.8,4.5 z" fill="#4a9a3a"/><rect x="827.9" y="769" width="19" height="16" fill="#2c2a30"/><g fill="#c8ccd0"><rect x="812.3" y="772.5" width="4.2" height="3.6"/><rect x="818" y="772.5" width="4.2" height="3.6"/><rect x="812.3" y="777.6" width="4.2" height="3.6"/><rect x="818" y="777.6" width="4.2" height="3.6"/></g><rect x="833.2" y="772.5" width="8.8" height="8.8" fill="#c8ccd0"/><rect x="835" y="773.8" width="4.5" height="3.3" fill="#38353c"/><rect x="835" y="778.3" width="5.5" height="1.5" fill="#38353c"/><path d="M852.5,772.8 h9.5 M853.5,772.8 v4.5 h7.5 v-4.5 M857.2,777.3 v3 M854.8,781.5 h4.8" fill="none" stroke="#c8ccd0" stroke-width="1"/><rect x="895.6" y="776.8" width="5.4" height="1.3" fill="#c8ccd0"/><rect x="905" y="776.9" width="81" height="1.1" fill="#c8ccd0"/><circle cx="937.8" cy="777.4" r="2.6" fill="#38353c" stroke="#c8ccd0" stroke-width="1.3"/><rect x="945.8" y="774" width="1.1" height="7" fill="#c8ccd0"/><path d="M989.8,777.4 h6.2 M992.9,774.3 v6.2" stroke="#c8ccd0" stroke-width="1.4"/><rect x="1002.5" y="772.8" width="10.3" height="9.2" fill="none" stroke="#c8ccd0" stroke-width="1"/><path d="M1003,773.3 l3,3 M1012.3,773.3 l-3,3 M1003,781.5 l3,-3 M1012.3,781.5 l-3,-3" stroke="#c8ccd0" stroke-width="1.2"/></svg>
<div class="t" style="left:955.2px;top:188.17px;font-size:11.45px;color:#555;transform:scaleX(0.9179);"><u>G</u>roup</div>
<div class="a" style="left:236.9px;top:190.1px;width:555.3px;height:411px;background:#ffffff;border:1px solid #a3a9ae;box-sizing:border-box;box-shadow:0 1px 5px rgba(0,0,0,0.18);"></div>
<div class="a" style="left:237.9px;top:191.1px;width:553.3px;height:35.7px;background:#dde3e7;"></div>
<div class="t" style="left:254.4px;top:202.88px;font-size:12.61px;color:#555b61;transform:scaleX(0.9702);">Variables</div>
<svg class="a" style="left:0;top:0" width="1030" height="400" viewBox="0 0 1030 400"><path d="M771.4,205 l7.4,7.3 M778.8,205 l-7.4,7.3" stroke="#c6c8ca" stroke-width="1.3"/></svg>
<div class="t" style="left:256.4px;top:243.14px;font-size:13.48px;color:#3b8fd9;transform:scaleX(0.9947);">Project</div>
<div class="t" style="left:315px;top:243.14px;font-size:13.48px;color:#555b61;transform:scaleX(1.0567);">Built-In</div>
<div class="a" style="left:471.5px;top:239.3px;width:165.5px;height:23.3px;background:#fff;border:1px solid #cfd6dc;box-sizing:border-box;"></div>
<div class="t" style="left:476.3px;top:246.19px;font-size:10.72px;color:#555;transform:scaleX(0.9531);">Search variables</div>
<div class="a" style="left:642.2px;top:239.1px;width:24px;height:23.8px;background:#fff;border:1px solid #cfd6dc;box-sizing:border-box;"></div>
<div class="a" style="left:670.3px;top:239.1px;width:24px;height:23.8px;background:#fff;border:1px solid #cfd6dc;box-sizing:border-box;"></div>
<div class="a" style="left:698.3px;top:239.1px;width:24px;height:23.8px;background:#fff;border:1px solid #cfd6dc;box-sizing:border-box;"></div>
<div class="a" style="left:726.6px;top:239.1px;width:24px;height:23.8px;background:#ececec;border:1px solid #c4c8cc;box-sizing:border-box;"></div>
<div class="a" style="left:755px;top:239.1px;width:24px;height:23.8px;background:#fff;border:1px solid #cfd6dc;box-sizing:border-box;"></div>
<div class="a" style="left:238.5px;top:273.8px;width:537px;height:23.8px;background:#dee3e7;"></div>
<div class="t" style="left:256.4px;top:280.76px;font-size:10.87px;color:#596066;-webkit-text-stroke:0.3px currentColor;transform:scaleX(0.9700);">Name</div>
<div class="t" style="left:429.3px;top:280.76px;font-size:10.87px;color:#596066;-webkit-text-stroke:0.3px currentColor;transform:scaleX(0.9640);">Type</div>
<div class="t" style="left:530.7px;top:280.76px;font-size:10.87px;color:#596066;-webkit-text-stroke:0.3px currentColor;transform:scaleX(0.9999);">Default Value</div>
<div class="t" style="left:660.2px;top:280.76px;font-size:10.87px;color:#596066;-webkit-text-stroke:0.3px currentColor;transform:scaleX(0.9822);">Use Count</div>
<div class="t" style="left:256.4px;top:304.94px;font-size:11.01px;color:#555;transform:scaleX(0.9258);">checkone</div>
<div class="t" style="left:429.3px;top:304.94px;font-size:11.01px;color:#555;transform:scaleX(0.9362);">Text</div>
<div class="t" style="left:660.3px;top:305.81px;font-size:9.28px;color:#3d96dc;transform:scaleX(0.9891);">3</div>
<div class="a" style="left:660.2px;top:315.40000000000003px;width:6px;height:1px;background:#3d96dc;"></div>
<div class="t" style="left:660.3px;top:330.01px;font-size:9.28px;color:#3d96dc;transform:scaleX(0.9891);">3</div>
<div class="a" style="left:660.2px;top:339.6px;width:6px;height:1px;background:#3d96dc;"></div>
<div class="t" style="left:660.3px;top:354.21px;font-size:9.28px;color:#3d96dc;transform:scaleX(0.9891);">1</div>
<div class="a" style="left:660.2px;top:363.8px;width:6px;height:1px;background:#3d96dc;"></div>
<div class="t" style="left:660.3px;top:378.41px;font-size:9.28px;color:#3d96dc;transform:scaleX(0.9891);">4</div>
<div class="a" style="left:660.2px;top:388.00000000000006px;width:6px;height:1px;background:#3d96dc;"></div>
<div class="t" style="left:660.3px;top:402.61px;font-size:9.28px;color:#3d96dc;transform:scaleX(0.9891);">1</div>
<div class="a" style="left:660.2px;top:412.20000000000005px;width:6px;height:1px;background:#3d96dc;"></div>
<div class="t" style="left:660.3px;top:426.81px;font-size:9.28px;color:#3d96dc;transform:scaleX(0.9891);">4</div>
<div class="a" style="left:660.2px;top:436.40000000000003px;width:6px;height:1px;background:#3d96dc;"></div>
<div class="t" style="left:660.3px;top:451.01px;font-size:9.28px;color:#3d96dc;transform:scaleX(0.9891);">1</div>
<div class="a" style="left:660.2px;top:460.6px;width:6px;height:1px;background:#3d96dc;"></div>
<div class="a" style="left:238.5px;top:467.0px;width:537px;height:24.2px;background:#1686d6;"></div>
<div class="t" style="left:660.3px;top:475.21px;font-size:9.28px;color:#e0f0ff;transform:scaleX(0.9891);">1</div>
<div class="a" style="left:660.2px;top:484.8px;width:6px;height:1px;background:#e0f0ff;"></div>
<div class="t" style="left:660.3px;top:499.41px;font-size:9.28px;color:#3d96dc;transform:scaleX(0.9891);">4</div>
<div class="a" style="left:660.2px;top:509.00000000000006px;width:6px;height:1px;background:#3d96dc;"></div>
<div class="t" style="left:256.4px;top:522.74px;font-size:11.01px;color:#555;transform:scaleX(0.9041);">leader_q1_res</div>
<div class="t" style="left:429.3px;top:522.74px;font-size:11.01px;color:#555;transform:scaleX(0.9362);">Text</div>
<div class="t" style="left:660.3px;top:523.61px;font-size:9.28px;color:#3d96dc;transform:scaleX(0.9891);">1</div>
<div class="a" style="left:660.2px;top:533.1999999999999px;width:6px;height:1px;background:#3d96dc;"></div>
<div class="a" style="left:775.2px;top:273.8px;width:16.8px;height:270px;background:#dde2e6;"></div>
<div class="a" style="left:775.2px;top:274.6px;width:16.8px;height:15.7px;background:#fff;"></div>
<div class="a" style="left:775.2px;top:290.3px;width:16.8px;height:171.3px;background:#9ea5ab;"></div>
<div class="a" style="left:775.2px;top:527.6px;width:15.8px;height:15.6px;background:#fff;border:1px solid #e3e6e9;box-sizing:border-box;"></div>
<svg class="a" style="left:0;top:0" width="1030" height="792" viewBox="0 0 1030 792"><path d="M652.2,244.6 h3.2 v4.6 h4.6 v3.2 h-4.6 v4.6 h-3.2 v-4.6 h-4.6 v-3.2 h4.6 z" fill="#52a844" stroke="#3d8a34" stroke-width="0.6"/><rect x="676.3" y="245.8" width="9.5" height="11" fill="#fff" stroke="#6b6f73" stroke-width="1"/><path d="M678,249 h5 M678,251.2 h4 M678,253.4 h3" stroke="#aab" stroke-width="0.7"/><path d="M680,255 l1,-3 l6,-6.5 l2,2 l-6,6.5 z" fill="#f0b429" stroke="#c07a10" stroke-width="0.6"/><path d="M686.8,245.6 l2,2 l0.9,-1 l-2,-2 z" fill="#e05050"/><g stroke="#6b6f73" stroke-width="1"><path d="M704,245 h6 l2,2 v8 h-8 z" fill="#fff"/><path d="M707.5,248 h6.5 l2.5,2.5 v6.8 h-9 z" fill="#fff"/></g><path d="M709,251.5 h6 M709,253.5 h6 M709,255.5 h6" stroke="#a9b4d0" stroke-width="1"/><g fill="#fff" stroke="#b9bcbf" stroke-width="1"><rect x="732" y="246.5" width="8.5" height="11"/><rect x="734.5" y="245" width="3.5" height="2.5"/><path d="M737.5,250.3 h4.5 l2.5,2.5 v4.8 h-7 z"/></g><g fill="#e8eaec" stroke="#8c9296" stroke-width="1"><path d="M761.5,246.5 h11 M764.5,246.5 v-1.8 h5 v1.8" fill="none"/><path d="M762.5,248 l1,9.5 h7 l1,-9.5 z"/></g><path d="M765.8,249.5 v6.5 M768.2,249.5 v6.5" stroke="#8c9296" stroke-width="0.8"/><path d="M780.6,284 l2.2,-3 l2.2,3 z" fill="#b5babe"/><path d="M780.5,375 h4.5 M780.5,376.6 h4.5 M780.5,378.2 h4.5" stroke="#e0e4e7" stroke-width="0.8"/><path d="M550.3,408.8 h4.6 l-2.3,2.6 z" fill="#8e9398"/></svg>
<svg class="a" style="left:0;top:0" width="1030" height="792" viewBox="0 0 1030 792"><path d="M780.3,533.2 h5.4 l-2.7,3.6 z" fill="#a9aeb2"/></svg>
<div class="a" style="left:238.5px;top:543.7px;width:553px;height:56.3px;background:#f3f3f3;border-top:1px solid #e3e3e3;box-sizing:border-box;"></div>
<div class="a" style="left:252.5px;top:565px;width:15px;height:15px;"><svg width="15" height="15" viewBox="0 0 15 15"><circle cx="7.5" cy="7.5" r="6.5" fill="none" stroke="#5f6368" stroke-width="1.3"/><rect x="6.8" y="6.3" width="1.5" height="5" fill="#5f6368"/><rect x="6.8" y="3.6" width="1.5" height="1.5" fill="#5f6368"/></svg></div>
<div class="t" style="left:272.6px;top:567.89px;font-size:11.3px;color:#555;transform:scaleX(0.8416);">LEARN MORE...</div>
<div class="a" style="left:646.3px;top:558.9px;width:60px;height:28.4px;background:#1686d6;border-radius:14.2px;"></div>
<div class="t" style="left:668.2px;top:568.9px;font-size:10.0px;color:#fff;-webkit-text-stroke:0.3px currentColor;transform:scaleX(0.9410);">OK</div>
<div class="a" style="left:717.3px;top:558.9px;width:60px;height:28.4px;background:#9aa2a9;border-radius:14.2px;"></div>
<div class="t" style="left:727.2px;top:568.9px;font-size:10.0px;color:#fff;-webkit-text-stroke:0.3px currentColor;transform:scaleX(0.9315);">CANCEL</div>
<div class="a" style="left:790.8px;top:191px;width:1.5px;height:410px;background:#a3a9ae;"></div>
<div class="a" style="left:239.8px;top:323.1px;width:347.2px;height:197.6px;background:transparent;border:2px solid #f5101a;box-sizing:border-box;box-shadow:1px 2px 4px rgba(0,0,0,0.3);"></div>
<div class="a" style="left:241.8px;top:325.2px;width:341.2px;height:193.2px;background:#ffffff;border-right:1px solid #b8bcc0;box-sizing:border-box;"></div>
<div class="a" style="left:241.8px;top:325.2px;width:340.2px;height:35.8px;background:#dde3e7;"></div>
<div class="t" style="left:258.1px;top:336.94px;font-size:12.9px;color:#555b61;transform:scaleX(0.9581);">Variable</div>
<svg class="a" style="left:0;top:0" width="1030" height="400" viewBox="0 0 1030 400"><path d="M558.3,339.8 l7,7 M565.3,339.8 l-7,7" stroke="#c9cbcd" stroke-width="1.2"/></svg>
<div class="t" style="left:258.5px;top:376.79px;font-size:10.72px;color:#555;transform:scaleX(0.9591);"><u>N</u>ame:</div>
<div class="t" style="left:258.5px;top:404.79px;font-size:10.72px;color:#555;transform:scaleX(0.9072);"><u>T</u>ype:</div>
<div class="t" style="left:258.5px;top:432.69px;font-size:11.3px;color:#555;transform:scaleX(0.9060);">Default <u>v</u>alue:</div>
<div class="a" style="left:330.8px;top:369.4px;width:234.6px;height:24.1px;background:#fff;border:1.5px solid #5ea6e3;box-sizing:border-box;"></div>
<div class="a" style="left:335.4px;top:374px;width:30.4px;height:14px;background:#0b74d9;"></div>
<div class="t" style="left:336px;top:375.82px;font-size:11.74px;color:#fff;transform:scaleX(0.8889);">leader</div>
<div class="a" style="left:330.9px;top:398.2px;width:234.4px;height:23.4px;background:#efefef;border:1px solid #d7dadd;box-sizing:border-box;"></div>
<div class="t" style="left:341.6px;top:405.01px;font-size:10.58px;color:#b0b0b0;transform:scaleX(0.9997);">Text</div>
<div class="a" style="left:330.9px;top:426.1px;width:234.4px;height:23.5px;background:#fff;border:1px solid #cfd6dc;box-sizing:border-box;"></div>
<div class="a" style="left:241.8px;top:464.3px;width:340.2px;height:54px;background:#f3f3f3;border-top:1px solid #e3e3e3;box-sizing:border-box;"></div>
<svg class="a" style="left:0;top:0" width="1030" height="792" viewBox="0 0 1030 792"><path d="M550.3,408.8 h4.6 l-2.3,2.6 z" fill="#8e9398"/></svg>
<div class="a" style="left:434.6px;top:479px;width:60.2px;height:28.7px;background:#1686d6;border-radius:14.3px;"></div>
<div class="t" style="left:457.1px;top:488.98px;font-size:10.14px;color:#fff;-webkit-text-stroke:0.3px currentColor;transform:scaleX(0.9289);">OK</div>
<div class="a" style="left:505.4px;top:479px;width:60.4px;height:28.7px;background:#9aa2a9;border-radius:14.3px;"></div>
<div class="t" style="left:515.4px;top:488.98px;font-size:10.14px;color:#fff;-webkit-text-stroke:0.3px currentColor;transform:scaleX(0.9202);">CANCEL</div>
</body></html>
